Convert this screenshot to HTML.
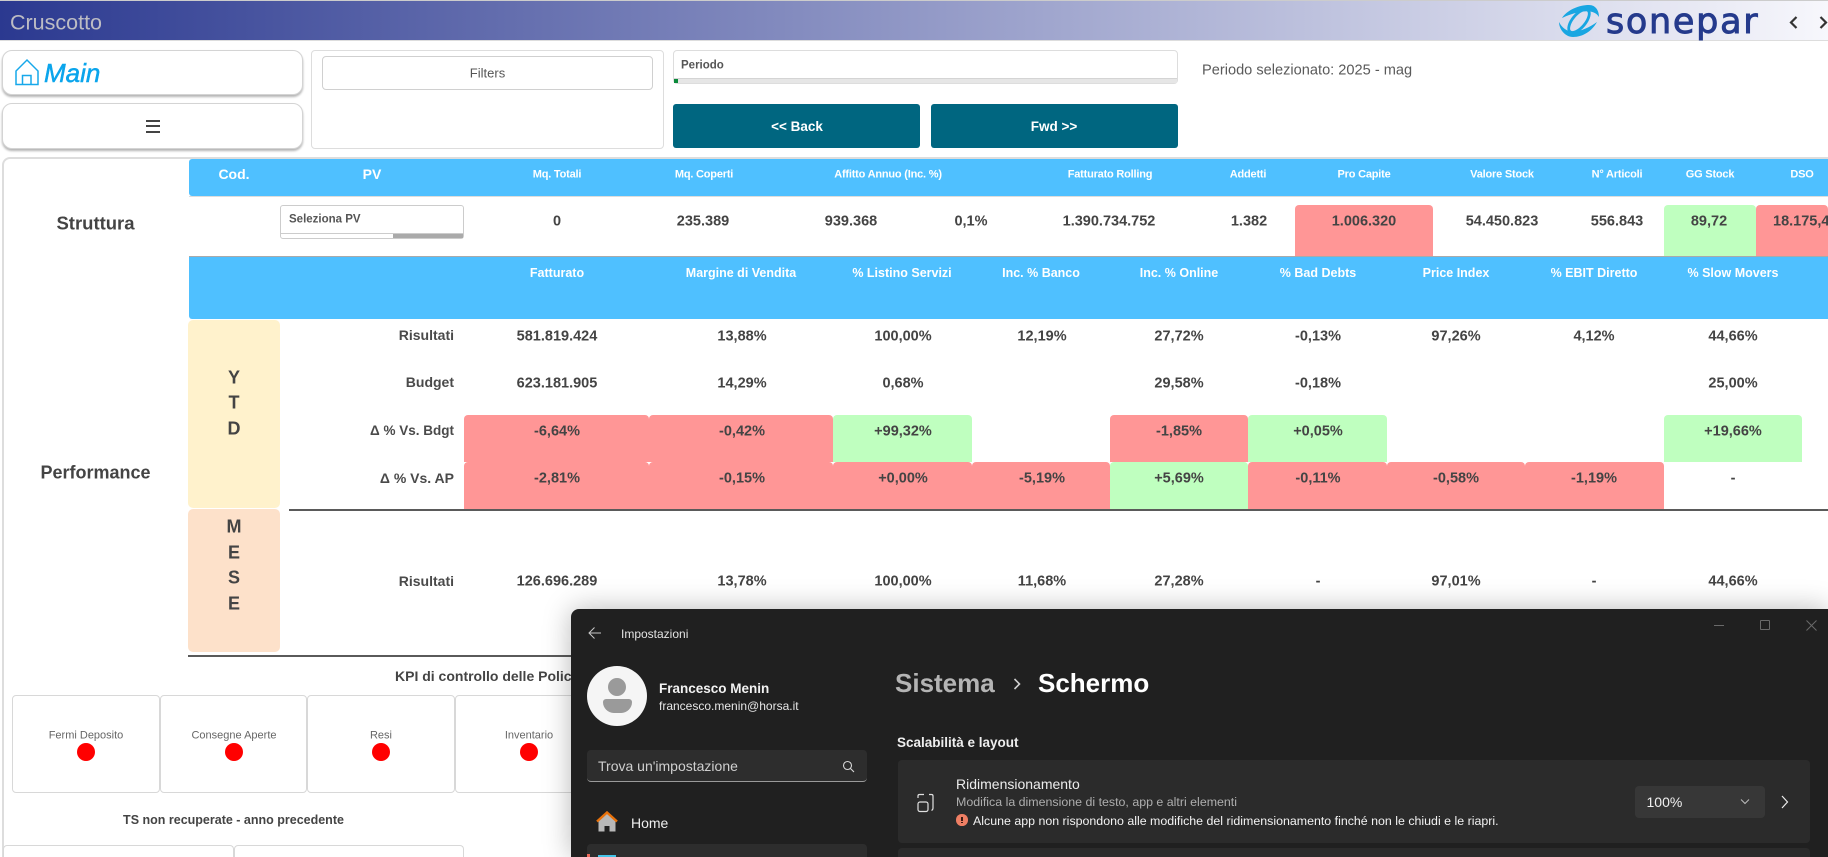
<!DOCTYPE html>
<html lang="it"><head><meta charset="utf-8"><title>Cruscotto</title>
<style>
html,body{margin:0;padding:0;width:1828px;height:857px;overflow:hidden;background:#fff}
body{position:relative;font-family:"Liberation Sans",sans-serif;color:#444}
div,span,svg{position:absolute;box-sizing:border-box}
#root{left:0;top:0;width:1828px;height:857px;overflow:hidden}
.t{white-space:nowrap;transform:translate(-50%,-50%);line-height:1.15}
.l{white-space:nowrap;transform:translateY(-50%);line-height:1.15}
.r{white-space:nowrap;transform:translate(-100%,-50%);line-height:1.15;font-size:14px;font-weight:bold;color:#4a4a4a}
.h{color:#fff;font-weight:bold;font-size:11px;letter-spacing:-.2px;top:175px}
.h2{color:#fff;font-weight:bold;font-size:12.5px;top:273px}
.v{font-weight:bold;font-size:14.5px;color:#444}
.r1{top:337px}.r2{top:384px}.r3{top:432px}.r4{top:479px}.r5{top:582px}
.c1{left:557px}.c2{left:742px}.c3{left:903px}.c4{left:1042px}.c5{left:1179px}.c6{left:1318px}.c7{left:1456px}.c8{left:1594px}.c9{left:1733px}
.red{background:#ff9696}.grn{background:#bfffbf}
.cell{border-radius:4px 4px 0 0}
.y3{top:415px;height:47px}.y4{top:462px;height:47px}
.btn{background:#fff;border:1px solid #d4d4d4;border-radius:10px;box-shadow:0 2px 2px #b5b5b5}
.kpi{top:695px;height:98px;border:1px solid #d8d8d8;border-radius:4px;background:#fff}
.kl{top:736px;font-size:11px;color:#666}
.dot{top:743px;width:18px;height:18px;border-radius:50%;background:#f00}
.let{left:234px;font-size:18px;font-weight:bold;color:#444}
.w{color:#fff}
.sv{top:222px}
</style></head><body><div id="root">

<!-- Header -->
<div style="left:0;top:0;width:1828px;height:41px;background:linear-gradient(90deg,#2b3990 0,#f7f7fc 100%);border-top:1px solid #ccc;border-bottom:1px solid #ddd"></div>
<span class="l" style="left:10px;top:23px;font-size:21.5px;color:#bdbdc4">Cruscotto</span>
<svg style="left:1559px;top:5px" width="40" height="32" viewBox="0 0 40 32">
  <g fill="#19a6e2">
    <path d="M3 13C8 5 20 0 30 0C37 0 40 6 40 12C37 7 31 5.500 24 6.500C15 8 8 10.500 3 13z"/>
    <path d="M0 17C0 24 6 32 14 32C24 32 33 26 38 17C31 22 22 26.500 14 26.500C8 26.500 3 23 0 17z"/>
  </g>
  <ellipse cx="20" cy="16" rx="14" ry="6.500" transform="rotate(-50 20 16)" fill="none" stroke="#19a6e2" stroke-width="2.800"/>
</svg>
<span class="l" style="left:1606px;top:22px;font-family:'DejaVu Sans',sans-serif;font-size:35px;letter-spacing:1.7px;color:#253a8c;-webkit-text-stroke:.9px #253a8c">sonepar</span>
<svg style="left:1786px;top:14px" width="42" height="17" viewBox="0 0 42 17" fill="none" stroke="#333" stroke-width="2.200"><path d="M10.500 3L5 8.500l5.500 5.500"/><path d="M34.500 3l5.500 5.500-5.500 5.500"/></svg>

<!-- Top controls -->
<div class="btn" style="left:2px;top:50px;width:301px;height:45px"></div>
<svg style="left:14px;top:58px" width="26" height="28" viewBox="0 0 26 28" fill="none" stroke="#17a8ea" stroke-width="1.500"><path d="M2 26.500V13L13 2l11 11v13.500z"/><path d="M8.500 26.500V17.500h8.500v9"/></svg>
<span class="l" style="left:44px;top:74px;font-size:26px;font-style:italic;color:#0ba5ec;-webkit-text-stroke:.5px #0ba5ec">Main</span>
<div class="btn" style="left:2px;top:103px;width:301px;height:46px"></div>
<div style="left:146px;top:119.500px;width:14px;height:2px;background:#444"></div>
<div style="left:146px;top:125px;width:14px;height:2px;background:#444"></div>
<div style="left:146px;top:131px;width:14px;height:2px;background:#444"></div>

<div style="left:311px;top:50px;width:353px;height:99px;border:1px solid #ddd;border-radius:4px"></div>
<div style="left:322px;top:56px;width:331px;height:34px;border:1px solid #d0d0d0;border-radius:4px"></div>
<span class="t" style="left:487.500px;top:74px;font-size:13px;color:#555">Filters</span>

<div style="left:673px;top:50px;width:505px;height:34px;border:1px solid #ddd;border-radius:4px"></div>
<span class="l" style="left:681px;top:66px;font-size:11.500px;font-weight:bold;color:#555">Periodo</span>
<div style="left:674px;top:78px;width:503px;height:5px;background:#e6e6e6;border-top:1px solid #d4d4d4"></div>
<div style="left:674px;top:79px;width:4px;height:4px;background:#0a8a3a"></div>

<div style="left:673px;top:104px;width:247px;height:44px;background:#006680;border-radius:3px"></div>
<div style="left:931px;top:104px;width:247px;height:44px;background:#006680;border-radius:3px"></div>
<span class="t w" style="left:797px;top:127px;font-size:13.500px;font-weight:bold">&lt;&lt; Back</span>
<span class="t w" style="left:1054px;top:127px;font-size:13.500px;font-weight:bold">Fwd &gt;&gt;</span>
<span class="l" style="left:1202px;top:71px;font-size:14.600px;color:#5a5a5a">Periodo selezionato: 2025 - mag</span>

<!-- Main panel frame -->
<div style="left:2px;top:157px;width:1826px;height:700px;border:2px solid #ddd;border-right:0;border-bottom:0;border-radius:8px 0 0 0"></div>

<!-- Struttura -->
<div style="left:189px;top:159px;width:1639px;height:37px;background:#4fc0ff;border-radius:3px 0 0 3px"></div>
<div style="left:189px;top:196px;width:1639px;height:1px;background:#ddd"></div>
<span class="t w" style="left:234px;top:174px;font-size:14px;font-weight:bold">Cod.</span>
<span class="t w" style="left:372px;top:174px;font-size:14px;font-weight:bold">PV</span>
<span class="t h" style="left:557px">Mq. Totali</span>
<span class="t h" style="left:704px">Mq. Coperti</span>
<span class="t h" style="left:888px">Affitto Annuo (Inc. %)</span>
<span class="t h" style="left:1110px">Fatturato Rolling</span>
<span class="t h" style="left:1248px">Addetti</span>
<span class="t h" style="left:1364px">Pro Capite</span>
<span class="t h" style="left:1502px">Valore Stock</span>
<span class="t h" style="left:1617px">N° Articoli</span>
<span class="t h" style="left:1710px">GG Stock</span>
<span class="t h" style="left:1802px">DSO</span>

<span class="t" style="left:95.500px;top:223px;font-size:18.500px;font-weight:bold;color:#444">Struttura</span>

<div style="left:280px;top:205px;width:184px;height:34px;border:1px solid #ccc;border-radius:3px;background:#fff"></div>
<div style="left:281px;top:233px;width:182px;height:1px;background:#ccc"></div>
<div style="left:393px;top:234px;width:70px;height:4px;background:#aaa"></div>
<span class="l" style="left:289px;top:220px;font-size:11.500px;font-weight:bold;color:#555">Seleziona PV</span>

<div class="cell red" style="left:1295px;top:205px;width:138px;height:51px"></div>
<div class="cell grn" style="left:1664px;top:205px;width:92px;height:51px"></div>
<div class="cell red" style="left:1756px;top:205px;width:72px;height:51px;overflow:hidden"><span class="l v" style="left:17px;top:17px">18.175,45</span></div>

<span class="t v sv" style="left:557px">0</span>
<span class="t v sv" style="left:703px">235.389</span>
<span class="t v sv" style="left:851px">939.368</span>
<span class="t v sv" style="left:971px">0,1%</span>
<span class="t v sv" style="left:1109px">1.390.734.752</span>
<span class="t v sv" style="left:1249px">1.382</span>
<span class="t v sv" style="left:1364px">1.006.320</span>
<span class="t v sv" style="left:1502px">54.450.823</span>
<span class="t v sv" style="left:1617px">556.843</span>
<span class="t v sv" style="left:1709px">89,72</span>

<!-- Performance header -->
<div style="left:189px;top:256px;width:1639px;height:1px;background:#aaa"></div>
<div style="left:189px;top:257px;width:1639px;height:62px;background:#4fc0ff;border-radius:0 0 0 3px"></div>
<span class="t h2 c1">Fatturato</span>
<span class="t h2" style="left:741px">Margine di Vendita</span>
<span class="t h2" style="left:902px">% Listino Servizi</span>
<span class="t h2" style="left:1041px">Inc. % Banco</span>
<span class="t h2" style="left:1179px">Inc. % Online</span>
<span class="t h2 c6">% Bad Debts</span>
<span class="t h2 c7">Price Index</span>
<span class="t h2 c8">% EBIT Diretto</span>
<span class="t h2 c9">% Slow Movers</span>

<span class="t" style="left:95.500px;top:473px;font-size:18px;font-weight:bold;color:#444">Performance</span>

<div style="left:188px;top:320px;width:92px;height:188px;background:#fff2cc;border-radius:5px"></div>
<div style="left:188px;top:509px;width:92px;height:143px;background:#fde1ca;border-radius:5px"></div>
<span class="t let" style="top:378px">Y</span>
<span class="t let" style="top:403px">T</span>
<span class="t let" style="top:429px">D</span>
<span class="t let" style="top:527px">M</span>
<span class="t let" style="top:553px">E</span>
<span class="t let" style="top:578px">S</span>
<span class="t let" style="top:604px">E</span>

<!-- coloured cells -->
<div class="cell red y3" style="left:464px;width:185px"></div>
<div class="cell red y3" style="left:649px;width:184px"></div>
<div class="cell grn y3" style="left:833px;width:139px"></div>
<div class="cell red y3" style="left:1110px;width:138px"></div>
<div class="cell grn y3" style="left:1248px;width:139px"></div>
<div class="cell grn y3" style="left:1664px;width:138px"></div>

<div class="cell red y4" style="left:464px;width:185px"></div>
<div class="cell red y4" style="left:649px;width:184px"></div>
<div class="cell red y4" style="left:833px;width:139px"></div>
<div class="cell red y4" style="left:972px;width:138px"></div>
<div class="cell grn y4" style="left:1110px;width:138px"></div>
<div class="cell red y4" style="left:1248px;width:139px"></div>
<div class="cell red y4" style="left:1387px;width:138px"></div>
<div class="cell red y4" style="left:1525px;width:139px"></div>

<div style="left:289px;top:509px;width:1539px;height:2px;background:#5a5a5a"></div>
<div style="left:188px;top:655px;width:1640px;height:2px;background:#5a5a5a"></div>

<span class="r" style="left:454px;top:335px">Risultati</span>
<span class="r" style="left:454px;top:382px">Budget</span>
<span class="r" style="left:454px;top:431px;font-size:13.500px">Δ % Vs. Bdgt</span>
<span class="r" style="left:454px;top:478px">Δ % Vs. AP</span>
<span class="r" style="left:454px;top:581px">Risultati</span>

<span class="t v r1 c1">581.819.424</span><span class="t v r1 c2">13,88%</span><span class="t v r1 c3">100,00%</span><span class="t v r1 c4">12,19%</span><span class="t v r1 c5">27,72%</span><span class="t v r1 c6">-0,13%</span><span class="t v r1 c7">97,26%</span><span class="t v r1 c8">4,12%</span><span class="t v r1 c9">44,66%</span>
<span class="t v r2 c1">623.181.905</span><span class="t v r2 c2">14,29%</span><span class="t v r2 c3">0,68%</span><span class="t v r2 c5">29,58%</span><span class="t v r2 c6">-0,18%</span><span class="t v r2 c9">25,00%</span>
<span class="t v r3 c1">-6,64%</span><span class="t v r3 c2">-0,42%</span><span class="t v r3 c3">+99,32%</span><span class="t v r3 c5">-1,85%</span><span class="t v r3 c6">+0,05%</span><span class="t v r3 c9">+19,66%</span>
<span class="t v r4 c1">-2,81%</span><span class="t v r4 c2">-0,15%</span><span class="t v r4 c3">+0,00%</span><span class="t v r4 c4">-5,19%</span><span class="t v r4 c5">+5,69%</span><span class="t v r4 c6">-0,11%</span><span class="t v r4 c7">-0,58%</span><span class="t v r4 c8">-1,19%</span><span class="t v r4 c9">-</span>
<span class="t v r5 c1">126.696.289</span><span class="t v r5 c2">13,78%</span><span class="t v r5 c3">100,00%</span><span class="t v r5 c4">11,68%</span><span class="t v r5 c5">27,28%</span><span class="t v r5 c6">-</span><span class="t v r5 c7">97,01%</span><span class="t v r5 c8">-</span><span class="t v r5 c9">44,66%</span>

<!-- KPI -->
<span class="l" style="left:395px;top:676px;font-size:14px;font-weight:bold;color:#444">KPI di controllo delle Policy</span>
<div class="kpi" style="left:12px;width:148px"></div>
<div class="kpi" style="left:160px;width:147px"></div>
<div class="kpi" style="left:307px;width:148px"></div>
<div class="kpi" style="left:455px;width:148px"></div>
<span class="t kl" style="left:86px">Fermi Deposito</span>
<span class="t kl" style="left:234px">Consegne Aperte</span>
<span class="t kl" style="left:381px">Resi</span>
<span class="t kl" style="left:529px">Inventario</span>
<div class="dot" style="left:77px"></div>
<div class="dot" style="left:225px"></div>
<div class="dot" style="left:372px"></div>
<div class="dot" style="left:520px"></div>
<span class="t" style="left:233.500px;top:820px;font-size:12.500px;font-weight:bold;color:#444">TS non recuperate - anno precedente</span>
<div class="kpi" style="left:3px;top:845px;width:231px;height:12px;border-bottom:0;border-radius:4px 4px 0 0"></div>
<div class="kpi" style="left:234px;top:845px;width:230px;height:12px;border-bottom:0;border-radius:4px 4px 0 0"></div>

<!-- Settings window -->
<div style="left:571px;top:609px;width:1257px;height:248px;background:#202020;border-radius:8px 0 0 0;box-shadow:0 0 28px rgba(0,0,0,.28)"></div>
<svg style="left:587px;top:626px" width="16" height="14" viewBox="0 0 16 14" fill="none" stroke="#c8c8c8" stroke-width="1"><path d="M14 7H2M7.500 1.500L2 7l5.500 5.500"/></svg>
<span class="l" style="left:621px;top:635px;font-size:12px;color:#e4e4e4">Impostazioni</span>

<div style="left:587px;top:666px;width:60px;height:60px;border-radius:50%;background:#f5f5f5"></div>
<div style="left:608px;top:678px;width:18px;height:18px;border-radius:50%;background:#9a9a9a"></div>
<div style="left:603px;top:699px;width:29px;height:14px;background:#9a9a9a;border-radius:4px 4px 14px 14px"></div>
<span class="l" style="left:659px;top:689px;font-size:13.500px;font-weight:bold;color:#f2f2f2">Francesco Menin</span>
<span class="l" style="left:659px;top:707px;font-size:12px;color:#e6e6e6">francesco.menin@horsa.it</span>

<span class="l" style="left:895px;top:684px;font-size:26px;font-weight:bold;color:#b4b4b4">Sistema</span>
<svg style="left:1011px;top:676px" width="12" height="16" viewBox="0 0 12 16" fill="none" stroke="#d0d0d0" stroke-width="1.600"><path d="M3.500 3l5 5-5 5"/></svg>
<span class="l" style="left:1038px;top:684px;font-size:26px;font-weight:bold;color:#fff">Schermo</span>

<div style="left:587px;top:750px;width:280px;height:32px;background:#2d2d2d;border-radius:4px;border-bottom:1px solid #9a9a9a"></div>
<span class="l" style="left:598px;top:766px;font-size:14px;color:#cfcfcf">Trova un'impostazione</span>
<svg style="left:842px;top:760px" width="13" height="13" viewBox="0 0 13 13" fill="none" stroke="#d8d8d8" stroke-width="1.100"><circle cx="5.500" cy="5.500" r="4"/><path d="M8.500 8.500l3.500 3.500"/></svg>

<svg style="left:596px;top:811px" width="22" height="22" viewBox="0 0 22 22"><path d="M2.500 10L11 2l8.500 8v10.500h-6V15h-5v5.500h-6z" fill="#b8b8b8"/><path d="M1 10.500L11 1.500l10 9" fill="none" stroke="#e8710a" stroke-width="2.400"/></svg>
<span class="l" style="left:631px;top:823px;font-size:14px;color:#efefef">Home</span>

<div style="left:587px;top:844px;width:280px;height:13px;background:#2d2d2d;border-radius:4px 4px 0 0"></div>
<div style="left:587px;top:854px;width:3px;height:3px;background:#f06a5a"></div>
<div style="left:598px;top:855px;width:18px;height:2px;background:#45c4e8"></div>

<span class="l" style="left:897px;top:743px;font-size:13.500px;font-weight:bold;color:#eee">Scalabilità e layout</span>
<div style="left:897.500px;top:760px;width:912px;height:83px;background:#2b2b2b;border-radius:4px"></div>
<div style="left:897.500px;top:848px;width:912px;height:9px;background:#2b2b2b;border-radius:4px 4px 0 0"></div>

<svg style="left:917px;top:793px" width="18" height="20" viewBox="0 0 18 20" fill="none" stroke="#e0e0e0" stroke-width="1.200"><rect x="1" y="9" width="10" height="9.500" rx="2"/><path d="M1 5V3q0-1.500 1.500-1.500H7M12 1.500h2.500Q16 1.500 16 3v12q0 1.800-1.500 2.500"/></svg>
<span class="l" style="left:956px;top:784px;font-size:14px;color:#ededed">Ridimensionamento</span>
<span class="l" style="left:956px;top:802px;font-size:12.400px;color:#aeaeae">Modifica la dimensione di testo, app e altri elementi</span>
<div style="left:956px;top:814px;width:11.500px;height:11.500px;border-radius:50%;background:#ef7f64"></div>
<div style="left:961.200px;top:816.500px;width:1.400px;height:4px;background:#3a1a12"></div>
<div style="left:961.200px;top:821.500px;width:1.400px;height:1.500px;background:#3a1a12"></div>
<span class="l" style="left:973px;top:821px;font-size:12.400px;color:#f2f2f2">Alcune app non rispondono alle modifiche del ridimensionamento finché non le chiudi e le riapri.</span>

<div style="left:1635px;top:786px;width:130px;height:32px;background:#373737;border-radius:4px"></div>
<span class="l" style="left:1646.500px;top:802px;font-size:14px;color:#f0f0f0">100%</span>
<svg style="left:1740px;top:798px" width="10" height="7" viewBox="0 0 10 7" fill="none" stroke="#bdbdbd" stroke-width="1"><path d="M1 1.500l4 4 4-4"/></svg>
<svg style="left:1780px;top:795px" width="10" height="14" viewBox="0 0 10 14" fill="none" stroke="#ececec" stroke-width="1.200"><path d="M2 1l5.500 6L2 13"/></svg>

<div style="left:1714px;top:624.500px;width:10px;height:1px;background:#6a6a6a"></div>
<div style="left:1760px;top:620px;width:10px;height:10px;border:1px solid #6a6a6a;border-radius:1px"></div>
<svg style="left:1806px;top:619.500px" width="11" height="11" viewBox="0 0 11 11" fill="none" stroke="#6a6a6a" stroke-width="1"><path d="M.5.500l10 10M10.500.500l-10 10"/></svg>

</div></body></html>
